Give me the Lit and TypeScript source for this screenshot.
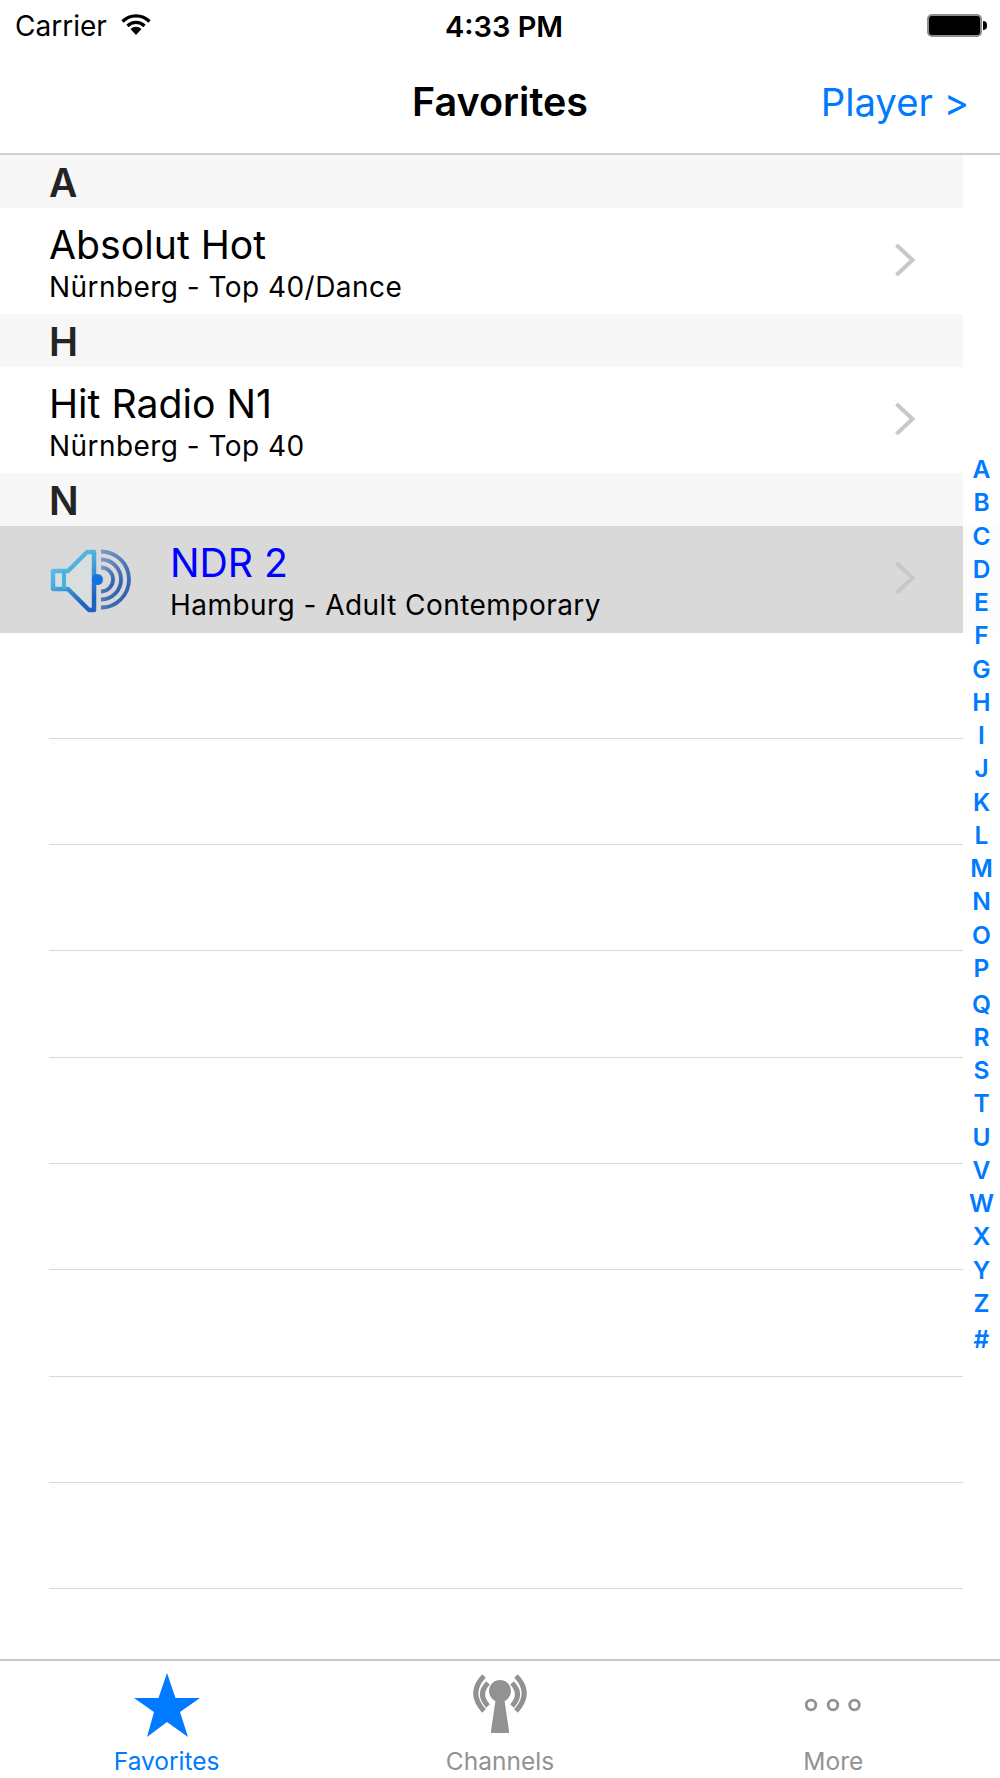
import { LitElement, html, css, svg } from "lit";
import { customElement } from "lit/decorators.js";

const chevron = svg`<svg class="chev" viewBox="0 0 22 34"><path d="M2.5 2 L18.5 17 L2.5 32" fill="none" stroke="#c7c7cc" stroke-width="4"/></svg>`;

const speaker = svg`<svg class="speaker" viewBox="0 0 84 67">
  <defs>
    <linearGradient id="sg" x1="0" y1="0" x2="0.5" y2="1"><stop offset="0" stop-color="#6fd0ee"/><stop offset="0.5" stop-color="#45a9dc"/><stop offset="1" stop-color="#1f62c4"/></linearGradient>
    <linearGradient id="wg" x1="0" y1="0" x2="1" y2="1"><stop offset="0" stop-color="#7d9cc4"/><stop offset="1" stop-color="#2456ac"/></linearGradient>
    <filter id="sb" x="-10%" y="-10%" width="120%" height="120%"><feGaussianBlur stdDeviation="0.6"/></filter>
  </defs>
  <g filter="url(#sb)">
    <path d="M4 24 H19 L38 5 H45 V63 H40 L19 42 H4 Z" fill="#dbe3e6" fill-opacity=".5" stroke="url(#sg)" stroke-width="4.500" stroke-linejoin="round"/>
    <path d="M15 24 V42" stroke="#45b4de" stroke-width="4"/>
    <circle cx="48.500" cy="32.500" r="5.500" fill="#1470e0"/>
    <g fill="none" stroke="url(#wg)" stroke-width="3.800">
      <path d="M52 20.500 A12 12 0 0 1 52 44.500"/>
      <path d="M52 12.500 A20 20 0 0 1 52 52.500"/>
      <path d="M52 4.500 A28 28 0 0 1 52 60.500"/>
    </g>
  </g>
</svg>`;

const wifi = svg`<svg class="wifi" viewBox="0 0 30 21">
  <g fill="none" stroke="#000" stroke-width="3.200"><path d="M1.500 7.500 A19 19 0 0 1 28.500 7.500"/><path d="M6.500 12 A12 12 0 0 1 23.500 12"/></g>
  <path d="M9.500 15 A8 8 0 0 1 20.500 15 L15 21 Z" fill="#000"/>
</svg>`;

const star = svg`<svg class="ico" width="66" height="64" viewBox="0 0 66 64"><path d="M33 0 L41.500 25 H66 L46 39 L54 64 L33 49 L13 64 L20 39 L0 25 H24.500 Z" fill="#007aff"/></svg>`;

const antenna = svg`<svg class="ico" width="60" height="64" viewBox="0 0 60 64">
  <circle cx="30" cy="18" r="11" fill="#929292"/>
  <path d="M26 24 H34 L39 58 V60 H21 V58 Z" fill="#929292"/>
  <g fill="none" stroke="#929292" stroke-width="5">
    <path d="M14 3 Q-2.500 20 14 38"/><path d="M46 3 Q62.500 20 46 38"/>
    <path d="M18 10 Q7 21 18 33"/><path d="M42 10 Q53 21 42 33"/>
  </g>
</svg>`;

const more = svg`<svg class="ico" width="56" height="64" viewBox="0 0 56 64"><g fill="none" stroke="#929292" stroke-width="2.800"><circle cx="6" cy="32" r="4.800"/><circle cx="28" cy="32" r="4.800"/><circle cx="49.500" cy="32" r="4.800"/></g></svg>`;

const sections = [
  { letter: "A", rows: [{ title: "Absolut Hot", sub: "Nürnberg - Top 40/Dance" }] },
  { letter: "H", rows: [{ title: "Hit Radio N1", sub: "Nürnberg - Top 40" }] },
  { letter: "N", rows: [{ title: "NDR 2", sub: "Hamburg - Adult Contemporary", active: true }] },
];
const index = "ABCDEFGHIJKLMNOPQRSTUVWXYZ#".split("");

@customElement("app-root")
export class AppRoot extends LitElement {
  static styles = css`
    :host { display: block; width: 1000px; height: 1778px; background: #fff; font-family: Inter, "Liberation Sans", sans-serif; color: #000; overflow: hidden; }
    .page { position: relative; height: 1778px; display: flex; flex-direction: column; }
    .status { height: 50px; display: grid; grid-template-columns: 1fr auto 1fr; align-items: center; padding: 2px 13px 0 15px; box-sizing: border-box; font-size: 28px; }
    .carrier { display: flex; align-items: center; gap: 14px; }
    .wifi { width: 30px; height: 21px; margin-top: -3px; }
    .time { font-weight: 600; font-size: 29px; margin: 1px 0 0 6px; }
    .batt { justify-self: end; display: flex; align-items: center; margin-top: -2px; }
    .batt i { display: block; width: 55px; height: 23px; box-sizing: border-box; background: #000; border: 2px solid #8e8e8e; border-radius: 5px; }
    .batt b { display: block; width: 4px; height: 9px; background: #000; border-radius: 0 4px 4px 0; margin-left: 1px; }
    .nav { height: 105px; box-sizing: border-box; border-bottom: 2px solid #cfcfcf; display: grid; grid-template-columns: 1fr auto 1fr; align-items: center; padding: 1px 31px 0 31px; }
    .nav h1 { grid-column: 2; margin: 0; font-size: 39.500px; font-weight: 600; }
    .nav a { grid-column: 3; justify-self: end; color: #007aff; font-size: 38.300px; }
    .list { flex: 1; width: 963px; display: flex; flex-direction: column; }
    .sec { height: 53px; flex: none; background: #f7f7f7; display: flex; align-items: center; padding: 1px 0 0 49px; box-sizing: border-box; font-size: 39px; font-weight: 600; color: #242424; }
    .row { position: relative; height: 106.200px; flex: none; box-sizing: border-box; display: flex; align-items: center; padding: 2px 47px 0 49px; }
    .row.active { background: #d9d9d9; }
    .row.active::after { content: ""; position: absolute; left: 100%; top: 0; bottom: 0; width: 37px; background: #fcfcfc; }
    .speaker { width: 84px; height: 67px; margin: 0 37px 0 0; flex: none; }
    .text { flex: 1; display: flex; flex-direction: column; }
    .title { font-size: 39.200px; line-height: 50px; }
    .active .title { color: #0000ff; }
    .sub { font-size: 28px; line-height: 34px; letter-spacing: .45px; }
    .chev { width: 22px; height: 34px; flex: none; margin-top: -4px; }
    .sep { height: 106.300px; flex: none; box-sizing: border-box; border-bottom: 1px solid #d8d8d8; margin-left: 49px; }
    .index { position: absolute; top: 453px; right: 0; width: 37px; display: flex; flex-direction: column; align-items: center; color: #007aff; font-size: 24.500px; font-weight: 600; }
    .index span { height: 33.250px; line-height: 33.250px; }
    .index span.gap { margin-top: 2.500px; }
    .tabs { height: 119px; flex: none; box-sizing: border-box; border-top: 2px solid #c8c8c8; display: grid; grid-template-columns: repeat(3, 1fr); }
    .tab { display: flex; flex-direction: column; align-items: center; color: #929292; font-size: 24.500px; padding-top: 12px; }
    .tab.on { color: #007aff; }
    .tab span { line-height: 30px; margin-top: 8.500px; }
  `;

  render() {
    return html`<div class="page">
      <div class="status">
        <div class="carrier">Carrier ${wifi}</div>
        <div class="time">4:33 PM</div>
        <div class="batt"><i></i><b></b></div>
      </div>
      <div class="nav"><h1>Favorites</h1><a>Player &gt;</a></div>
      <div class="list">
        ${sections.map((s) => html`
          <div class="sec">${s.letter}</div>
          ${s.rows.map((r: any) => html`<div class="row ${r.active ? "active" : ""}">
            ${r.active ? speaker : ""}
            <div class="text"><div class="title">${r.title}</div><div class="sub">${r.sub}</div></div>
            ${chevron}
          </div>`)}`)}
        ${Array.from({ length: 9 }).map(() => html`<div class="sep"></div>`)}
      </div>
      <div class="index">${index.map((c) => html`<span class="${c === "Q" || c === "#" ? "gap" : ""}">${c}</span>`)}</div>
      <div class="tabs">
        <div class="tab on">${star}<span>Favorites</span></div>
        <div class="tab">${antenna}<span>Channels</span></div>
        <div class="tab">${more}<span>More</span></div>
      </div>
    </div>`;
  }
}
